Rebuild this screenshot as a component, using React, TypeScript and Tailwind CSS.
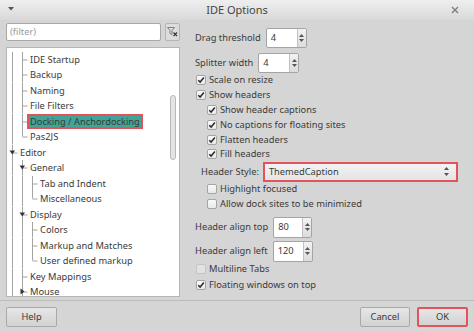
import React from "react";

type TreeRow = {
  label: string;
  level: number;
  anc: boolean[]; // ancestor verticals that pass through
  last?: boolean;
  arrow?: "down" | "right";
  selected?: boolean;
};

const rows: TreeRow[] = [
  { label: "IDE Startup", level: 1, anc: [true] },
  { label: "Backup", level: 1, anc: [true] },
  { label: "Naming", level: 1, anc: [true] },
  { label: "File Filters", level: 1, anc: [true] },
  { label: "Docking / Anchordocking", level: 1, anc: [true], selected: true },
  { label: "Pas2JS", level: 1, anc: [true], last: true },
  { label: "Editor", level: 0, anc: [], arrow: "down" },
  { label: "General", level: 1, anc: [true], arrow: "down" },
  { label: "Tab and Indent", level: 2, anc: [true, true] },
  { label: "Miscellaneous", level: 2, anc: [true, true], last: true },
  { label: "Display", level: 1, anc: [true], arrow: "down" },
  { label: "Colors", level: 2, anc: [true, true] },
  { label: "Markup and Matches", level: 2, anc: [true, true] },
  { label: "User defined markup", level: 2, anc: [true, true], last: true },
  { label: "Key Mappings", level: 1, anc: [true] },
  { label: "Mouse", level: 1, anc: [true], arrow: "right" },
];

const LINE = "#a3a3a3";

function TreeIndent({ row }: { row: TreeRow }) {
  const w = 13 + 10 * row.level;
  const h = 15.5;
  const x = 5.5 + 10 * row.level;
  const mid = 7.5;
  return (
    <svg width={w} height={h} className="shrink-0">
      {row.anc.map((on, k) =>
        on ? <line key={k} x1={5.5 + 10 * k} y1={0} x2={5.5 + 10 * k} y2={h} stroke={LINE} strokeWidth="1" /> : null
      )}
      <line x1={x} y1={0} x2={x} y2={row.last ? mid : h} stroke={LINE} strokeWidth="1" />
      <line x1={x} y1={mid + 0.5} x2={x + 5} y2={mid + 0.5} stroke={LINE} strokeWidth="1" />
      {row.arrow === "down" && <path d={`M${x - 3} ${mid - 2} L${x + 2.5} ${mid - 2} L${x - 0.25} ${mid + 2} Z`} fill="#333" />}
      {row.arrow === "right" && <path d={`M${x - 2} ${mid - 3} L${x + 2} ${mid} L${x - 2} ${mid + 3} Z`} fill="#333" />}
    </svg>
  );
}

function Check({ on, sub, disabled }: { on: boolean; sub?: boolean; disabled?: boolean }) {
  return (
    <span
      className={`flex h-[10px] w-[10px] shrink-0 items-center justify-center rounded-[2px] border ${
        disabled ? "border-[#c4c4c4] bg-[#e2e2e2]" : "border-[#a5a5a5] bg-gradient-to-b from-[#fafafa] to-[#e9e9e9]"
      } ${sub ? "ml-[18px]" : "ml-[7px]"}`}
    >
      {on && (
        <svg width="10" height="10" viewBox="0 0 10 10">
          <path d="M1.6 5.2 L3.9 7.6 L8.6 1.8" fill="none" stroke="#2b2b2b" strokeWidth="1.9" />
        </svg>
      )}
    </span>
  );
}

function CheckRow({ label, on, sub, h = "h-[14.8px]", disabled }: { label: string; on: boolean; sub?: boolean; h?: string; disabled?: boolean }) {
  return (
    <div className={`flex ${h} items-center gap-[3px]`}>
      <Check on={on} sub={sub} disabled={disabled} />
      <span>{label}</span>
    </div>
  );
}

function Spin({ value, w }: { value: string; w: string }) {
  return (
    <div className={`flex h-full ${w} overflow-hidden rounded-[2px] border border-[#a4a4a4] bg-white`}>
      <div className="flex flex-1 items-center pl-[4px]">{value}</div>
      <div className="flex w-[9px] flex-col items-center justify-center gap-[2px] border-l border-[#c2c2c2] bg-gradient-to-b from-[#f2f2f2] to-[#dcdcdc]">
        <svg width="5" height="3" viewBox="0 0 5 3"><path d="M0 3 L2.5 0 L5 3 Z" fill="#555" /></svg>
        <svg width="5" height="3" viewBox="0 0 5 3"><path d="M0 0 L2.5 3 L5 0 Z" fill="#555" /></svg>
      </div>
    </div>
  );
}

function Button({ label, w, hot }: { label: string; w: string; hot?: boolean }) {
  return (
    <div
      className={`flex h-[20px] ${w} items-center justify-center rounded-[2px] bg-gradient-to-b from-[#e6e6e6] to-[#d2d2d2] ${
        hot ? "border-2 border-[#e2535c]" : "border border-[#a9a9a9]"
      }`}
    >
      {label}
    </div>
  );
}

export default function App() {
  return (
    <div
      className="flex h-[332px] w-[474px] flex-col overflow-hidden bg-[#d5d5d5] text-[9.3px] text-[#3a3a3a]"
      style={{ fontFamily: '"Noto Sans", "Open Sans", sans-serif' }}
    >
      {/* title bar */}
      <div className="relative flex h-[20px] shrink-0 items-center justify-center bg-gradient-to-b from-[#efefef] to-[#d9d9d9] text-[11px] text-[#444]">
        <svg width="8" height="6" viewBox="0 0 8 6" className="absolute left-[7px] top-[6px]">
          <path d="M1 1 L7 1 L4 4.5 Z" fill="#555" />
        </svg>
        <span>IDE Options</span>
        <svg width="8" height="8" viewBox="0 0 8 8" className="absolute right-[15px] top-[6px]">
          <path d="M1 1 L7 7 M7 1 L1 7" stroke="#7a7a7a" strokeWidth="1.3" />
        </svg>
      </div>

      <div className="flex min-h-0 flex-1">
        {/* left column */}
        <div className="ml-[6px] flex w-[174px] flex-col">
          <div className="mt-[3px] flex h-[18px] gap-[4px]">
            <div className="flex flex-1 items-center rounded-[2px] border border-[#a8a8a8] bg-white pl-[3px] text-[#9a9a9a]">
              (filter)
            </div>
            <div className="flex w-[15px] items-center justify-center rounded-[2px] border border-[#b4b4b4] bg-[#dcdcdc]">
              <svg width="11" height="10" viewBox="0 0 11 10">
                <path d="M0.5 0.5 H7.5 L5 3.5 V7.5 L3 6.5 V3.5 Z" fill="none" stroke="#777" strokeWidth="0.9" />
                <path d="M6.5 5.5 L10 9 M10 5.5 L6.5 9" stroke="#333" strokeWidth="1.1" />
              </svg>
            </div>
          </div>

          <div className="mt-[6px] flex h-[250px] overflow-hidden border border-[#b5b5b5] bg-white">
            <div className="flex flex-1 flex-col pt-[3.5px]">
              {rows.map((r) => (
                <div key={r.label} className="flex h-[15.5px] shrink-0 items-center">
                  <TreeIndent row={r} />
                  {r.selected ? (
                    <span className="-ml-[3px] flex h-[15px] items-center border-2 border-[#e2535c] bg-[#40a496] px-[1px] leading-none">
                      {r.label}
                    </span>
                  ) : (
                    <span className="leading-none">{r.label}</span>
                  )}
                </div>
              ))}
            </div>
            <div className="flex w-[9px] justify-start pr-[2px]">
              <div className="mt-[47px] h-[65px] w-[6px] rounded-[3px] border border-[#b9b9b9] bg-[#e4e4e4]" />
            </div>
          </div>
        </div>

        {/* right column */}
        <div className="ml-[9px] flex flex-1 flex-col pr-[16px]">
          <div className="mt-[8px] flex h-[20px] items-center gap-[5px] pl-[6px]">
            <span>Drag threshold</span>
            <Spin value="4" w="w-[41px]" />
          </div>
          <div className="mt-[5px] flex h-[20px] items-center gap-[5px] pl-[6px]">
            <span>Splitter width</span>
            <Spin value="4" w="w-[41px]" />
          </div>
          <CheckRow label="Scale on resize" on />
          <CheckRow label="Show headers" on />
          <CheckRow label="Show header captions" on sub />
          <CheckRow label="No captions for floating sites" on sub />
          <CheckRow label="Flatten headers" on sub />
          <CheckRow label="Fill headers" on sub />
          <div className="flex h-[20px] items-center gap-[4px] pl-[12px]">
            <span>Header Style:</span>
            <div className="flex h-full flex-1 items-center justify-between border-2 border-[#e2535c] bg-gradient-to-b from-[#f3f3f3] to-[#e4e4e4] pl-[4px] pr-[7px]">
              <span>ThemedCaption</span>
              <svg width="5" height="9" viewBox="0 0 5 9">
                <path d="M0 3 L2.5 0 L5 3 Z M0 6 L2.5 9 L5 6 Z" fill="#555" />
              </svg>
            </div>
          </div>
          <CheckRow label="Highlight focused" on={false} sub h="h-[15px]" />
          <CheckRow label="Allow dock sites to be minimized" on={false} sub h="h-[15px]" />
          <div className="mt-[5px] flex h-[21px] items-center gap-[5px] pl-[6px]">
            <span>Header align top</span>
            <Spin value="80" w="w-[39px]" />
          </div>
          <div className="mt-[3px] flex h-[21px] items-center gap-[5px] pl-[6px]">
            <span>Header align left</span>
            <Spin value="120" w="w-[40px]" />
          </div>
          <CheckRow label="Multiline Tabs" on={false} h="h-[14px]" disabled />
          <div className="mt-[2px]">
            <CheckRow label="Floating windows on top" on h="h-[15px]" />
          </div>
        </div>
      </div>

      {/* bottom */}
      <div className="mt-[3px] h-px shrink-0 bg-[#bcbcbc]" />
      <div className="flex h-[31px] shrink-0 items-start px-[6px] pt-[6px]">
        <Button label="Help" w="w-[51px]" />
        <div className="flex-1" />
        <Button label="Cancel" w="w-[50px]" />
        <div className="w-[7px]" />
        <Button label="OK" w="w-[51px]" hot />
      </div>
    </div>
  );
}
